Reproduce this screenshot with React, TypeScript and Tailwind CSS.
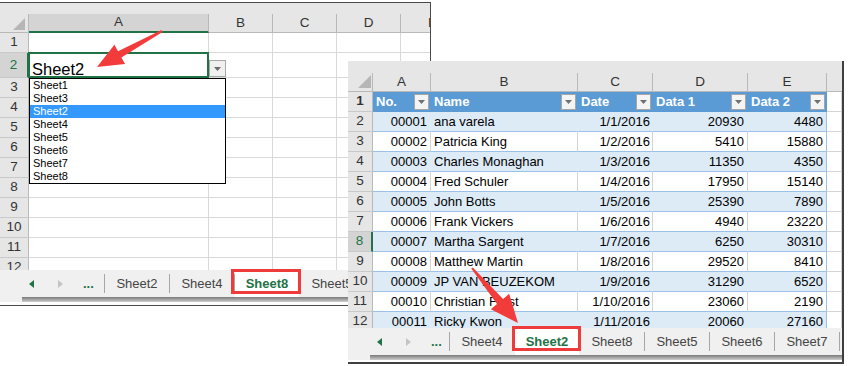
import React from "react";

type Pt = [number, number];
function arrow(tail: Pt, tip: Pt, headLen: number, headHalf: number, baseHalf: number, tailHalf: number) {
  const dx = tip[0] - tail[0];
  const dy = tip[1] - tail[1];
  const L = Math.hypot(dx, dy);
  const ux = dx / L;
  const uy = dy / L;
  const px = -uy;
  const py = ux;
  const bx = tip[0] - ux * headLen;
  const by = tip[1] - uy * headLen;
  const pts: Pt[] = [
    tip,
    [bx + px * headHalf, by + py * headHalf],
    [bx + px * baseHalf, by + py * baseHalf],
    [tail[0] + px * tailHalf, tail[1] + py * tailHalf],
    [tail[0] - px * tailHalf, tail[1] - py * tailHalf],
    [bx - px * baseHalf, by - py * baseHalf],
    [bx - px * headHalf, by - py * headHalf],
  ];
  return pts.map((p) => p.map((v) => v.toFixed(1)).join(",")).join(" ");
}

function Sep() {
  return <div className="w-px h-[19px] mt-[4px] shrink-0 bg-[#a6a6a6]" />;
}

function TabBar({ navW, tabs, active, boxCls }: { navW: string; tabs: string[]; active: number; boxCls: string }) {
  return (
    <div className="h-[27px] shrink-0 flex bg-[#f0f0f0] text-[13px] whitespace-nowrap">
      <div className={`${navW} shrink-0 flex items-center`}>
        <svg className="ml-[29px] shrink-0" width="5" height="8">
          <polygon points="5,0 5,8 0,4" fill="#217346" />
        </svg>
        <svg className="ml-[24px] shrink-0" width="5" height="8">
          <polygon points="0,0 0,8 5,4" fill="#c4c4c4" />
        </svg>
        <span className="ml-[20px] font-bold text-[#217346]">...</span>
      </div>
      <Sep />
      {tabs.map((t, i) => (
        <React.Fragment key={t}>
          {i === active ? (
            <div className="w-[64px] shrink-0 relative bg-white flex items-center justify-center font-bold text-[#217346]">
              {t}
              <div className={`absolute border-[3px] border-[#ee3b3b] ${boxCls}`} />
            </div>
          ) : (
            <div className="w-[64px] shrink-0 flex items-center justify-center text-[#444]">{t}</div>
          )}
          <Sep />
        </React.Fragment>
      ))}
    </div>
  );
}

function Shadow() {
  return (
    <div className="h-[5px] shrink-0 flex bg-[#f0f0f0]">
      <div className="ml-[22px] flex-1 bg-linear-to-b from-[#7a7a7a] to-[#cfcfcf]" />
    </div>
  );
}

function LRow({ n, h, sel, a }: { n: number; h: string; sel?: boolean; a?: React.ReactNode }) {
  return (
    <div className={`flex shrink-0 bg-white ${h}`}>
      <div
        className={`w-[29px] shrink-0 flex items-center justify-center border-b border-b-[#c9c9c9] text-[13.5px] ${
          sel ? "bg-[#d4d4d4] text-[#217346] border-r-2 border-r-[#217346]" : "bg-[#e6e6e6] text-[#333] border-r border-r-[#b9b9b9]"
        }`}
      >
        {n}
      </div>
      <div className="w-[180px] shrink-0 relative flex items-end border-r border-b border-[#d9d9d9]">{a}</div>
      <div className="w-[64px] shrink-0 border-r border-b border-[#d9d9d9]" />
      <div className="w-[64px] shrink-0 border-r border-b border-[#d9d9d9]" />
      <div className="w-[64px] shrink-0 border-r border-b border-[#d9d9d9]" />
      <div className="w-[64px] shrink-0 border-r border-b border-[#d9d9d9]" />
    </div>
  );
}

function LeftWindow() {
  const items = ["Sheet1", "Sheet3", "Sheet2", "Sheet4", "Sheet5", "Sheet6", "Sheet7", "Sheet8"];
  return (
    <div className="absolute left-0 top-[2px] w-[431px] h-[304px] border-t border-r border-b border-[#4a4a4a] bg-[#e6e6e6] overflow-hidden flex flex-col">
      <div className="h-[11px] shrink-0" />
      <div className="flex h-[19px] shrink-0 text-[13.5px] text-[#333]">
        <div className="w-[29px] shrink-0 relative border-r border-b border-[#b9b9b9]">
          <svg className="absolute left-[13px] top-[4px]" width="12" height="12">
            <polygon points="12,0 12,12 0,12" fill="#b6b6b6" />
          </svg>
        </div>
        <div className="w-[180px] shrink-0 flex items-center justify-center bg-[#d4d4d4] border-r border-r-[#b9b9b9] border-b-2 border-b-[#217346]">
          A
        </div>
        <div className="w-[64px] shrink-0 flex items-center justify-center border-r border-b border-[#b9b9b9]">B</div>
        <div className="w-[64px] shrink-0 flex items-center justify-center border-r border-b border-[#b9b9b9]">C</div>
        <div className="w-[64px] shrink-0 flex items-center justify-center border-r border-b border-[#b9b9b9]">D</div>
        <div className="w-[64px] shrink-0 flex items-center justify-center border-r border-b border-[#b9b9b9]">E</div>
      </div>
      <LRow n={1} h="h-[20px]" />
      <LRow
        n={2}
        h="h-[25px]"
        sel
        a={
          <>
            <span className="pl-[3px] text-[16.5px] leading-none text-black">Sheet2</span>
            <div className="absolute -left-[1px] -top-[1px] -right-[1px] -bottom-[1px] border-2 border-[#217346]" />
          </>
        }
      />
      {[3, 4, 5, 6, 7, 8, 9, 10, 11].map((n) => (
        <LRow key={n} n={n} h="h-[20px]" />
      ))}
      <div className="h-[12px] shrink-0 overflow-hidden">
        <LRow n={12} h="h-[20px]" />
      </div>
      <TabBar
        navW="w-[104px]"
        tabs={["Sheet2", "Sheet4", "Sheet8", "Sheet5", "Sheet6"]}
        active={2}
        boxCls="-left-[4px] -top-[1px] w-[70px] h-[25px]"
      />
      <Shadow />
      <div className="h-[3px] shrink-0 bg-white" />

      {/* dropdown button */}
      <div className="absolute left-[209px] top-[57px] w-[17px] h-[17px] bg-[#f0f0f0] border border-[#a8a8a8] flex items-center justify-center">
        <svg width="7" height="4">
          <polygon points="0,0 7,0 3.5,4" fill="#6b6b6b" />
        </svg>
      </div>
      {/* dropdown list */}
      <div className="absolute left-[29px] top-[75px] w-[197px] h-[106px] bg-white border border-black text-[11px] text-black">
        {items.map((t) => (
          <div
            key={t}
            className={`h-[13px] leading-[13px] pl-[3px] ${t === "Sheet2" ? "bg-[#3399ff] text-white" : ""}`}
          >
            {t}
          </div>
        ))}
      </div>
    </div>
  );
}

const data: string[][] = [
  ["00001", "ana varela", "1/1/2016", "20930", "4480"],
  ["00002", "Patricia King", "1/2/2016", "5410", "15880"],
  ["00003", "Charles Monaghan", "1/3/2016", "11350", "4350"],
  ["00004", "Fred Schuler", "1/4/2016", "17950", "15140"],
  ["00005", "John Botts", "1/5/2016", "25390", "7890"],
  ["00006", "Frank Vickers", "1/6/2016", "4940", "23220"],
  ["00007", "Martha Sargent", "1/7/2016", "6250", "30310"],
  ["00008", "Matthew Martin", "1/8/2016", "29520", "8410"],
  ["00009", "JP VAN BEUZEKOM", "1/9/2016", "31290", "6520"],
  ["00010", "Christian Frost", "1/10/2016", "23060", "2190"],
  ["00011", "Ricky Kwon", "1/11/2016", "20060", "27160"],
];

function RowHdr({ n, sel }: { n: number; sel?: boolean }) {
  return (
    <div
      className={`w-[25px] shrink-0 flex items-center justify-center border-b border-b-[#c9c9c9] text-[13.5px] ${
        sel ? "bg-[#d4d4d4] text-[#217346] border-r-2 border-r-[#217346]" : "bg-[#e6e6e6] text-[#333] border-r border-r-[#b9b9b9]"
      }`}
    >
      {n}
    </div>
  );
}

function FilterBtn() {
  return (
    <div className="absolute right-[2px] top-[2px] w-[15px] h-[16px] bg-[#f4f4f4] border border-[#a6a6a6] flex items-center justify-center">
      <svg width="7" height="4">
        <polygon points="0,0 7,0 3.5,4" fill="#707070" />
      </svg>
    </div>
  );
}

function DataRow({ n, d }: { n: number; d: string[] }) {
  const blue = n % 2 === 0;
  const c = blue ? "bg-[#ddebf7] border-r-[#ddebf7]" : "bg-white border-r-[#d4d4d4]";
  const e = blue ? "bg-[#ddebf7]" : "bg-white";
  return (
    <div className="flex h-[20px] shrink-0 text-[13px] text-black whitespace-nowrap">
      <RowHdr n={n} sel={n === 8} />
      <div className={`w-[58px] shrink-0 flex items-center justify-end pr-[3px] border-r border-b border-b-[#9bc2e6] ${c}`}>{d[0]}</div>
      <div className={`w-[147px] shrink-0 flex items-center pl-[3px] border-r border-b border-b-[#9bc2e6] ${c}`}>{d[1]}</div>
      <div className={`w-[75px] shrink-0 flex items-center justify-end pr-[2px] border-r border-b border-b-[#9bc2e6] ${c}`}>{d[2]}</div>
      <div className={`w-[95px] shrink-0 flex items-center justify-end pr-[3px] border-r border-b border-b-[#9bc2e6] ${c}`}>{d[3]}</div>
      <div className={`w-[79px] shrink-0 flex items-center justify-end pr-[3px] border-r border-r-[#9bc2e6] border-b border-b-[#9bc2e6] ${e}`}>{d[4]}</div>
      <div className="flex-1 bg-white border-r border-b border-[#d4d4d4]" />
    </div>
  );
}

function RightWindow() {
  return (
    <div className="absolute left-[348px] top-[61px] w-[496px] h-[303px] border-r-2 border-b-2 border-[#3f3f3f] bg-[#e6e6e6] overflow-hidden flex flex-col">
      <div className="h-[12px] shrink-0" />
      <div className="flex h-[19px] shrink-0 text-[13.5px] text-[#333]">
        <div className="w-[25px] shrink-0 relative border-r border-b border-[#b9b9b9]">
          <svg className="absolute left-[10px] top-[2px]" width="13" height="13">
            <polygon points="13,0 13,13 0,13" fill="#b6b6b6" />
          </svg>
        </div>
        <div className="w-[58px] shrink-0 flex items-center justify-center border-r border-b border-[#b9b9b9]">A</div>
        <div className="w-[147px] shrink-0 flex items-center justify-center border-r border-b border-[#b9b9b9]">B</div>
        <div className="w-[75px] shrink-0 flex items-center justify-center border-r border-b border-[#b9b9b9]">C</div>
        <div className="w-[95px] shrink-0 flex items-center justify-center border-r border-b border-[#b9b9b9]">D</div>
        <div className="w-[79px] shrink-0 flex items-center justify-center border-r border-b border-[#b9b9b9]">E</div>
        <div className="flex-1 border-b border-[#b9b9b9]" />
      </div>
      <div className="flex h-[20px] shrink-0 text-[13px] font-bold text-white whitespace-nowrap">
        <RowHdr n={1} />
        <div className="w-[58px] shrink-0 relative flex items-center pl-[3px] bg-[#5b9bd5]">
          No.
          <FilterBtn />
        </div>
        <div className="w-[147px] shrink-0 relative flex items-center pl-[3px] bg-[#5b9bd5]">
          Name
          <FilterBtn />
        </div>
        <div className="w-[75px] shrink-0 relative flex items-center pl-[3px] bg-[#5b9bd5]">
          Date
          <FilterBtn />
        </div>
        <div className="w-[95px] shrink-0 relative flex items-center pl-[3px] bg-[#5b9bd5]">
          Data 1
          <FilterBtn />
        </div>
        <div className="w-[79px] shrink-0 relative flex items-center pl-[3px] bg-[#5b9bd5]">
          Data 2
          <FilterBtn />
        </div>
        <div className="flex-1 bg-white border-r border-b border-[#d4d4d4]" />
      </div>
      {data.slice(0, 10).map((d, i) => (
        <DataRow key={i} n={i + 2} d={d} />
      ))}
      <div className="h-[16px] shrink-0 overflow-hidden">
        <DataRow n={12} d={data[10]} />
      </div>
      <TabBar
        navW="w-[101px]"
        tabs={["Sheet4", "Sheet2", "Sheet8", "Sheet5", "Sheet6", "Sheet7"]}
        active={1}
        boxCls="-left-[3px] -top-[2px] w-[69px] h-[25px]"
      />
      <Shadow />
      <div className="h-[2px] shrink-0 bg-white" />
    </div>
  );
}

export default function App() {
  return (
    <div className="relative w-[849px] h-[366px] bg-white overflow-hidden font-['Liberation_Sans',Arial,sans-serif]">
      <LeftWindow />
      <RightWindow />
      <svg className="absolute left-0 top-0 pointer-events-none" width="849" height="366">
        <polygon points={arrow([162, 31], [97, 67], 26, 11, 3.5, 1)} fill="#f23c3c" />
        <polygon points={arrow([472, 268], [518, 323], 28, 12, 4, 1)} fill="#f23c3c" />
      </svg>
    </div>
  );
}
